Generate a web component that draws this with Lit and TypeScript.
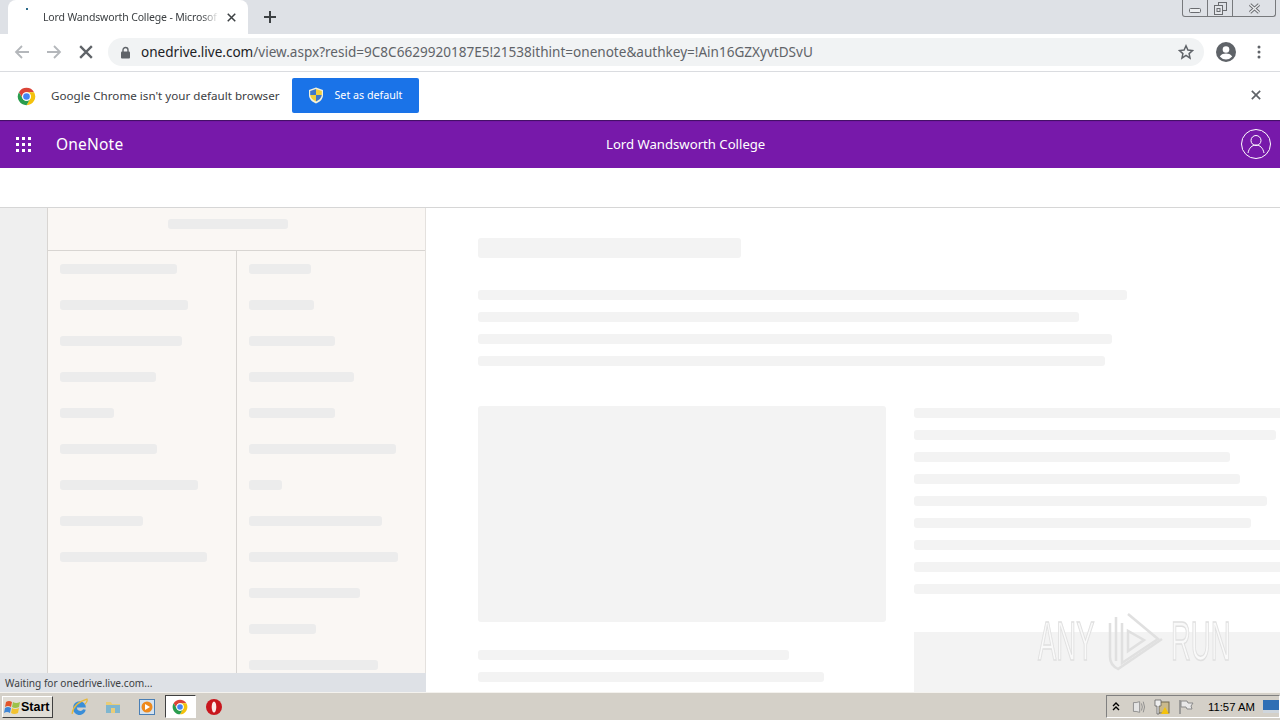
import { LitElement, html, css } from 'lit';
import { customElement } from 'lit/decorators.js';

const NAV_LEFT = [117, 128, 122, 96, 54, 97, 138, 83, 147];
const NAV_RIGHT = [62, 65, 86, 105, 86, 147, 33, 133, 149, 111, 67, 129];
const PARAGRAPH = [649, 601, 634, 627];
const SIDE_TEXT = [380, 362, 316, 326, 353, 337, 380, 380, 380];

const chromeLogo = (size: number) => html`
  <svg width=${size} height=${size} viewBox="0 0 24 24">
    <path d="M21.530 6.500A11 11 0 0 0 2.470 6.500L7.240 14.750A5.500 5.500 0 0 1 12 6.500z" fill="#db4437" />
    <path d="M12 23A11 11 0 0 0 21.530 6.500H12A5.500 5.500 0 0 1 16.760 14.750z" fill="#f4c20d" />
    <path d="M2.470 6.500A11 11 0 0 0 12 23L16.760 14.750A5.500 5.500 0 0 1 7.240 14.750z" fill="#2a9d4e" />
    <circle cx="12" cy="12" r="5.500" fill="#fff" />
    <circle cx="12" cy="12" r="4.200" fill="#4285f4" />
  </svg>
`;

const closeIcon = (size: number, color: string, width = 2) => html`
  <svg width=${size} height=${size} viewBox="0 0 12 12">
    <path d="M1 1l10 10M11 1L1 11" stroke=${color} stroke-width=${width} fill="none" />
  </svg>
`;

const arrow = (flip: boolean) => html`
  <svg width="16" height="16" viewBox="0 0 16 16" style=${flip ? 'transform:scaleX(-1)' : ''}>
    <path d="M1 8h13M8 2l6 6-6 6" stroke="#b4b7bb" stroke-width="1.800" fill="none" />
  </svg>
`;

@customElement('app-root')
export class AppRoot extends LitElement {
  static styles = css`
    :host {
      display: flex;
      flex-direction: column;
      position: relative;
      width: 1280px;
      height: 720px;
      overflow: hidden;
      background: #fff;
      font-family: 'Noto Sans', 'Open Sans', sans-serif;
      color: #3c4043;
    }

    /* browser chrome */
    .tabstrip {
      height: 34px;
      flex: none;
      display: flex;
      align-items: flex-end;
      background: #dee1e6;
      padding-left: 8px;
    }
    .tab {
      width: 240px;
      height: 34px;
      box-sizing: border-box;
      background: #fff;
      border-radius: 8px 8px 0 0;
      display: flex;
      align-items: center;
      padding: 0 12px 0 18px;
      font-size: 10.500px;
      letter-spacing: -0.150px;
      line-height: 32px;
      color: #3c4043;
    }
    .favicon {
      width: 2px;
      height: 2px;
      background: #2b6a8a;
      margin: -17px 15px 0 0;
    }
    .tab-title {
      flex: 1;
      white-space: nowrap;
      -webkit-mask-image: linear-gradient(90deg, #000 90%, transparent);
      mask-image: linear-gradient(90deg, #000 90%, transparent);
    }
    .tab-close {
      display: flex;
      margin-left: 8px;
    }
    .new-tab {
      display: flex;
      align-self: center;
      margin-left: 16px;
    }
    .win-buttons {
      display: flex;
      align-self: flex-start;
      margin-left: auto;
      margin-right: 4px;
      height: 16px;
      border: 1px solid #77797c;
      border-top: none;
      border-radius: 0 0 3px 3px;
    }
    .win-buttons span {
      display: flex;
      align-items: center;
      justify-content: center;
      width: 24px;
    }
    .win-buttons span + span {
      border-left: 1px solid #77797c;
    }
    .win-buttons span:last-child {
      width: 42px;
    }

    .toolbar {
      height: 38px;
      flex: none;
      display: flex;
      align-items: center;
      box-sizing: border-box;
      background: #fff;
      border-bottom: 1px solid #dadce0;
      padding: 4px 19px 5px 14px;
    }
    .nav {
      display: flex;
      align-items: center;
      gap: 16px;
      width: 94px;
    }
    .nav svg:last-child {
      margin-left: 1px;
    }
    .omnibox {
      flex: 1;
      height: 28px;
      display: flex;
      align-items: center;
      background: #f1f3f4;
      border-radius: 14px;
      padding: 0 10px 0 12px;
      font-size: 13.550px;
      color: #5f6368;
      white-space: nowrap;
    }
    .omnibox svg:first-child {
      margin-right: 10px;
    }
    .omnibox b {
      font-weight: 400;
      color: #202124;
    }
    .omnibox .star {
      margin-left: auto;
    }
    .toolbar-right {
      display: flex;
      align-items: center;
      gap: 21px;
      margin-left: 12px;
    }

    .infobar {
      height: 48px;
      flex: none;
      box-sizing: border-box;
      display: flex;
      align-items: center;
      background: #fff;
      padding: 0 17px 2px;
      font-size: 11.640px;
      color: #3c4043;
    }
    .infobar > svg {
      margin-top: 2px;
    }
    .infobar .msg {
      margin: 0 12px 0 15px;
    }
    .default-btn {
      width: 127px;
      height: 35px;
      box-sizing: border-box;
      display: flex;
      align-items: center;
      background: #1a73e8;
      border-radius: 2px;
      padding-left: 16px;
      gap: 11px;
      color: #fff;
      font-size: 10.700px;
    }
    .infobar .dismiss {
      display: flex;
      margin-left: auto;
      margin-right: 2px;
    }

    /* onenote page */
    .suite-bar {
      height: 48px;
      flex: none;
      display: flex;
      align-items: center;
      background: #7719aa;
      box-shadow: inset 0 2px 1px -1px #3f1060;
      color: #fff;
      padding: 0 9px 0 16px;
    }
    .waffle {
      display: grid;
      grid-template-columns: repeat(3, 3px);
      gap: 3px;
    }
    .waffle i {
      width: 3px;
      height: 3px;
      background: #fff;
    }
    .brand {
      font-size: 15.500px;
      margin-left: 25px;
      letter-spacing: 0.200px;
    }
    .doc-title {
      flex: 1;
      text-align: center;
      font-size: 13.150px;
      padding-left: 7px;
    }
    .avatar {
      display: flex;
    }
    .ribbon {
      height: 40px;
      flex: none;
      box-sizing: border-box;
      border-bottom: 1px solid #d6d6d6;
    }

    .content {
      flex: 1;
      min-height: 0;
      display: flex;
      overflow: hidden;
    }
    .rail {
      width: 47px;
      flex: none;
      background: #efefef;
    }
    .notebook {
      width: 379px;
      flex: none;
      box-sizing: border-box;
      display: flex;
      flex-direction: column;
      background: #faf7f4;
      border-left: 1px solid #d8d5d2;
      border-right: 1px solid #e4e1de;
    }
    .notebook-head {
      height: 43px;
      flex: none;
      box-sizing: border-box;
      display: flex;
      align-items: center;
      border-bottom: 1px solid #d8d5d2;
      padding: 0 0 10px 120px;
    }
    .columns {
      flex: 1;
      display: flex;
    }
    .column {
      box-sizing: border-box;
      width: 188px;
      display: flex;
      flex-direction: column;
      gap: 26px;
      padding: 13px 12px;
    }
    .column + .column {
      width: 189px;
      border-left: 1px solid #d8d5d2;
    }
    .bar {
      flex: none;
      height: 10px;
      border-radius: 3px;
      background: #ececec;
    }
    .page {
      flex: 1;
      min-width: 0;
      box-sizing: border-box;
      padding: 30px 0 0 52px;
      overflow: hidden;
    }
    .page .bar {
      background: #f3f3f3;
    }
    .page-title {
      width: 263px;
      height: 20px;
      border-radius: 3px;
      background: #f3f3f3;
    }
    .paragraph {
      display: flex;
      flex-direction: column;
      gap: 12px;
      margin-top: 32px;
    }
    .split {
      display: flex;
      gap: 28px;
      margin-top: 40px;
    }
    .left-col {
      width: 408px;
      flex: none;
    }
    .picture {
      height: 216px;
      border-radius: 3px;
      background: #f3f3f3;
    }
    .caption {
      display: flex;
      flex-direction: column;
      gap: 12px;
      margin-top: 28px;
    }
    .right-col {
      flex: none;
      width: 380px;
      padding-top: 2px;
      display: flex;
      flex-direction: column;
      gap: 12px;
    }
    .grey-block {
      height: 60px;
      margin-top: 26px;
      background: #f3f3f3;
    }

    .status {
      position: absolute;
      left: 0;
      bottom: 28px;
      width: 426px;
      height: 19px;
      display: flex;
      align-items: center;
      padding-left: 5px;
      box-sizing: border-box;
      background: #dee1e6;
      font-size: 10.150px;
      color: #3c4043;
    }

    .watermark {
      position: absolute;
      left: 1038px;
      top: 608px;
      height: 66px;
      display: flex;
      align-items: center;
      font-family: 'Liberation Sans', sans-serif;
      font-size: 55px;
      color: #f9f9f9;
      -webkit-text-stroke: 1.500px #e0e0e0;
    }
    .watermark span {
      display: inline-block;
      transform: scaleX(0.5);
      transform-origin: left center;
      margin-right: -57px;
    }
    .watermark span.run {
      margin-right: -60px;
    }
    .watermark svg {
      margin: 0 7px 0 12px;
    }

    /* windows taskbar */
    .taskbar {
      height: 28px;
      flex: none;
      box-sizing: border-box;
      display: flex;
      align-items: center;
      background: #d4d0c8;
      border-top: 1px solid #f4f2ee;
      padding: 0 0 0 2px;
    }
    .start {
      width: 51px;
      height: 22px;
      margin-top: 1px;
      box-sizing: border-box;
      display: flex;
      align-items: center;
      gap: 1px;
      padding-left: 1px;
      border: 1px solid;
      border-color: #fff #404040 #404040 #fff;
      background: #e0ddd6;
      font-family: 'Liberation Sans', sans-serif;
      font-weight: 700;
      font-size: 12.500px;
      color: #000;
    }
    .quick {
      display: flex;
      align-items: center;
      margin-left: 10px;
    }
    .quick > * {
      display: flex;
      width: 33.500px;
      justify-content: center;
      align-items: center;
      box-sizing: border-box;
    }
    .quick .active {
      height: 23px;
      width: 31px;
      margin: 0 2px 0 1px;
      background: #fff;
      border: 1px solid;
      border-color: #404040 #fff #fff #404040;
    }
    .tray {
      margin-left: auto;
      width: 174px;
      height: 23px;
      box-sizing: border-box;
      display: flex;
      align-items: center;
      gap: 8px;
      padding-left: 5px;
      border: 1px solid;
      border-color: #808080 #fff #fff #808080;
      font-family: 'Liberation Sans', sans-serif;
      font-size: 11.300px;
      color: #000;
    }
    .clock {
      margin-left: 6px;
      white-space: nowrap;
    }
  `;

  private bars(widths: number[]) {
    return widths.map((w) => html`<div class="bar" style="width:${w}px"></div>`);
  }

  render() {
    return html`
      <div class="tabstrip">
        <div class="tab">
          <span class="favicon"></span>
          <span class="tab-title">Lord Wandsworth College - Microsof</span>
          <span class="tab-close">${closeIcon(9, '#3c4043')}</span>
        </div>
        <span class="new-tab">
          <svg width="12" height="12" viewBox="0 0 12 12"><path d="M6 0v12M0 6h12" stroke="#3c4043" stroke-width="2" /></svg>
        </span>
        <div class="win-buttons">
          <span>
            <svg width="12" height="5" viewBox="0 0 12 5" style="margin-top:5px"><rect x=".5" y=".5" width="11" height="4" rx="1" fill="#eceef0" stroke="#6a6c70" /></svg>
          </span>
          <span>
            <svg width="13" height="13" viewBox="0 0 13 13">
              <rect x="4.500" y=".5" width="8" height="8" fill="none" stroke="#6a6c70" />
              <rect x=".5" y="3.500" width="8" height="9" fill="#e4e6ea" stroke="#6a6c70" />
              <rect x="3" y="6.500" width="3" height="3" fill="none" stroke="#6a6c70" />
            </svg>
          </span>
          <span>
            <svg width="13" height="11" viewBox="0 0 13 11">
              <path d="M2 1.500l9 8M11 1.500l-9 8" stroke="#6a6c70" stroke-width="3.200" fill="none" />
              <path d="M2 1.500l9 8M11 1.500l-9 8" stroke="#eceef0" stroke-width="1.400" fill="none" />
            </svg>
          </span>
        </div>
      </div>

      <div class="toolbar">
        <div class="nav">
          ${arrow(true)} ${arrow(false)}
          ${closeIcon(14, '#5f6368')}
        </div>
        <div class="omnibox">
          <svg width="11" height="13" viewBox="0 0 11 13">
            <path d="M3 6V4a2.500 2.500 0 0 1 5 0v2" stroke="#5f6368" stroke-width="1.400" fill="none" />
            <rect x="1" y="5.500" width="9" height="7" rx="1" fill="#5f6368" />
          </svg>
          <span><b>onedrive.live.com</b>/view.aspx?resid=9C8C6629920187E5!21538ithint=onenote&authkey=!Ain16GZXyvtDSvU</span>
          <svg class="star" width="16" height="16" viewBox="0 0 16 16">
            <path d="M8 1.800l1.900 4.200 4.600.5-3.400 3.100.9 4.500L8 11.300l-4 2.800.9-4.500-3.400-3.100 4.600-.5z" fill="none" stroke="#5f6368" stroke-width="1.500" />
          </svg>
        </div>
        <div class="toolbar-right">
          <svg width="20" height="20" viewBox="0 0 20 20">
            <circle cx="10" cy="10" r="10" fill="#5f6368" />
            <circle cx="10" cy="7.500" r="3.300" fill="#fff" />
            <path d="M3.800 14.500c1.500-2.400 4-3 6.200-3s4.700.6 6.200 3a8 8 0 0 1-12.400 0z" fill="#fff" />
          </svg>
          <svg width="4" height="14" viewBox="0 0 4 14">
            <circle cx="2" cy="2" r="1.500" fill="#5f6368" />
            <circle cx="2" cy="7" r="1.500" fill="#5f6368" />
            <circle cx="2" cy="12" r="1.500" fill="#5f6368" />
          </svg>
        </div>
      </div>

      <div class="infobar">
        ${chromeLogo(19)}
        <span class="msg">Google Chrome isn't your default browser</span>
        <div class="default-btn">
          <svg width="16" height="17" viewBox="0 0 16 17">
            <path d="M8 .5l7 2.500v5c0 4-3 7-7 8.500-4-1.500-7-4.500-7-8.500V3z" fill="#f4f1dc" />
            <path d="M8 2L2.200 4v4H8zM8 8h5.800c-.3 3-2.800 5.200-5.800 6.500z" fill="#3f78c9" />
            <path d="M8 2l5.800 2v4H8zM8 8H2.200c.3 3 2.800 5.200 5.800 6.500z" fill="#f2cf3b" />
          </svg>
          <span>Set as default</span>
        </div>
        <span class="dismiss">${closeIcon(10, '#5f6368')}</span>
      </div>

      <div class="suite-bar">
        <div class="waffle">${Array.from({ length: 9 }, () => html`<i></i>`)}</div>
        <span class="brand">OneNote</span>
        <span class="doc-title">Lord Wandsworth College</span>
        <span class="avatar">
          <svg width="30" height="30" viewBox="0 0 30 30" fill="none" stroke="#fff">
            <circle cx="15" cy="15" r="14.500" />
            <circle cx="15" cy="11.500" r="5" />
            <path d="M7 24c1-5 4-8 8-8s7 3 8 8" />
          </svg>
        </span>
      </div>
      <div class="ribbon"></div>

      <div class="content">
        <div class="rail"></div>
        <div class="notebook">
          <div class="notebook-head"><div class="bar" style="width:120px"></div></div>
          <div class="columns">
            <div class="column">${this.bars(NAV_LEFT)}</div>
            <div class="column">${this.bars(NAV_RIGHT)}</div>
          </div>
        </div>
        <div class="page">
          <div class="page-title"></div>
          <div class="paragraph">${this.bars(PARAGRAPH)}</div>
          <div class="split">
            <div class="left-col">
              <div class="picture"></div>
              <div class="caption">${this.bars([311, 346])}</div>
            </div>
            <div class="right-col">
              ${this.bars(SIDE_TEXT)}
              <div class="grey-block"></div>
            </div>
          </div>
        </div>
      </div>

      <div class="status">Waiting for onedrive.live.com...</div>

      <div class="watermark">
        <span>ANY</span>
        <svg width="58" height="64" viewBox="0 0 58 64" fill="none" stroke="#e0e0e0" stroke-width="2.500">
          <path d="M10 8v44M16 14v40l36-24L22 5" />
          <path d="M22 22v20l16-11z" />
          <path d="M4 14v34q0 8 8 12l44-30" />
        </svg>
        <span class="run">RUN</span>
      </div>

      <div class="taskbar">
        <div class="start">
          <svg width="16" height="15" viewBox="0 0 16 15">
            <path d="M2 2q3-2 6 0L7 7Q4 5 1 7z" fill="#e2552b" />
            <path d="M9 2q3 2 7 0l-1 5q-4 2-7 0z" fill="#9cc24a" />
            <path d="M1 8q3-2 6 0l-1 5q-3-2-6 0z" fill="#3f86d6" />
            <path d="M8 8q3 2 7 0l-1 5q-4 2-7 0z" fill="#f2c230" />
          </svg>
          Start
        </div>
        <div class="quick">
          <span>
            <svg width="17" height="17" viewBox="0 0 16 16">
              <path d="M2 9a6 6 0 0 1 12 0H5.500a3.200 3.200 0 0 0 6 1.500l2.400.5A6 6 0 0 1 2 9z" fill="#3a8ed8" />
              <path d="M1 15Q2 5 15 1q1 2-2 5" fill="none" stroke="#e8b93c" stroke-width="1.200" />
            </svg>
          </span>
          <span>
            <svg width="16" height="15" viewBox="0 0 16 15">
              <path d="M1 3h5l1 2h8v9H1z" fill="#e8cc78" />
              <rect x="1" y="6" width="14" height="8" fill="#7fb6cf" />
              <rect x="6" y="9" width="4" height="5" fill="#e8cc78" />
            </svg>
          </span>
          <span>
            <svg width="16" height="16" viewBox="0 0 16 16">
              <rect x=".5" y=".5" width="15" height="15" fill="#d5e3f0" stroke="#4a7fb5" />
              <circle cx="8" cy="8" r="5.500" fill="#ee8a1d" />
              <path d="M6 5l5 3-5 3z" fill="#fff" />
            </svg>
          </span>
          <span class="active">${chromeLogo(16)}</span>
          <span>
            <svg width="16" height="16" viewBox="0 0 16 16">
              <circle cx="8" cy="8" r="8" fill="#c8161d" />
              <ellipse cx="8" cy="8" rx="2.300" ry="5.500" fill="#fbeaea" />
            </svg>
          </span>
        </div>
        <div class="tray">
          <svg width="8" height="9" viewBox="0 0 8 9">
            <path d="M1 4l3-3 3 3M1 8l3-3 3 3" fill="none" stroke="#000" stroke-width="1.400" />
          </svg>
          <svg width="18" height="16" viewBox="0 0 18 18">
            <path d="M8 4l4-1v12l-4-1H5V4z" fill="#e4e4e4" stroke="#8a8a8a" />
            <path d="M14 5q2 4 0 8M16 3q3 6 0 12" stroke="#8a8a8a" fill="none" />
          </svg>
          <svg width="16" height="16" viewBox="0 0 16 16">
            <rect x="4" y="3" width="11" height="11" fill="#c9b98c" stroke="#70684f" />
            <path d="M1 1h6v6H5v8H3V7H1z" fill="#eee" stroke="#555" stroke-width=".7" />
            <path d="M11 8l4 7H7z" fill="#f4c20d" />
          </svg>
          <svg width="16" height="16" viewBox="0 0 16 16">
            <path d="M2 1v14" stroke="#8a8a8a" stroke-width="1.500" />
            <path d="M3 2h6l1 2h5l-2 3 1 3H9L8 8H3z" fill="#e8e8e8" stroke="#8a8a8a" />
          </svg>
          <span class="clock">11:57 AM</span>
          <svg width="16" height="13" viewBox="0 0 16 13">
            <rect width="16" height="13" fill="#2f6fb5" />
            <rect y="10" width="16" height="3" fill="#cfd6dd" />
          </svg>
        </div>
      </div>
    `;
  }
}

declare global {
  interface HTMLElementTagNameMap {
    'app-root': AppRoot;
  }
}
